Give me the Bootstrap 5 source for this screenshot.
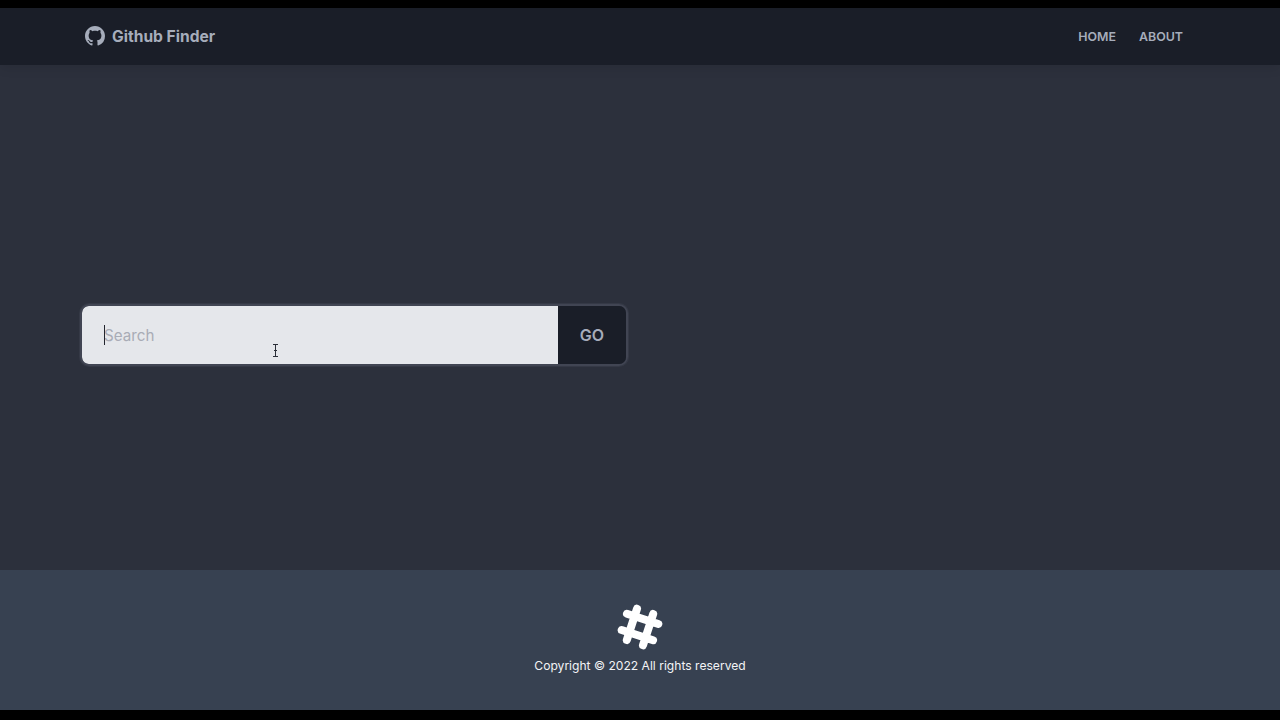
<!DOCTYPE html>
<html lang="en">
<head>
<meta charset="utf-8">
<title>Github Finder</title>
<link href="https://cdn.jsdelivr.net/npm/bootstrap@5.3.0/dist/css/bootstrap.min.css" rel="stylesheet">
<style>
html,body{height:100%;}
body{background:#000;font-family:Inter,"Liberation Sans",sans-serif;padding:8px 0 10px;}
.app-shell{height:702px;background:#2c303c;}
.top-bar{height:57px;background:#1a1e28;box-shadow:0 4px 10px rgba(0,0,0,.08);padding:0 85px;color:#a6adbb;}
.brand-icon{margin-top:-1px;}
.brand-name{font-size:15.6px;font-weight:700;color:#a6adbb;margin-left:-1px;}
.top-link{font-size:12.4px;font-weight:600;color:#a6adbb;text-decoration:none;position:relative;top:1px;}
.top-nav{gap:23px;padding-right:12px;}
.main-area{padding-left:80px;padding-top:35px;}
.search-ring{width:548px;height:62px;border:2px solid #414553;border-radius:9px;position:relative;overflow:hidden;box-shadow:0 0 0 1px #353946;}
.search-input{width:476px;background:#e5e7eb;border:0;outline:0;padding:2px 22px 0;font-size:15.2px;color:#1f2937;border-radius:6px 0 0 6px;}
.search-input::placeholder{color:#a9acb6;opacity:1;}
.search-go{flex:1;background:#1a1e28;color:#a6adbb;font-size:16px;font-weight:600;border:0;}
.caret-mark{position:absolute;left:22px;top:19px;width:1px;height:20px;background:#22252e;}
.beam-mark{position:absolute;left:189px;top:38px;}
.foot-area{height:140px;background:#374151;color:#f3f4f6;padding-top:34px;}
.foot-text{font-size:12.1px;margin-top:7px;line-height:18px;}
</style>
</head>
<body>
<div class="app-shell d-flex flex-column">
  <nav class="top-bar d-flex align-items-center justify-content-between">
    <div class="d-flex align-items-center gap-2">
      <svg class="brand-icon" width="20" height="20" viewBox="0 0 16 16" fill="#a6adbb" aria-hidden="true"><path d="M8 0C3.58 0 0 3.58 0 8c0 3.54 2.29 6.53 5.47 7.59.4.07.55-.17.55-.38 0-.19-.01-.82-.01-1.49-2.01.37-2.53-.49-2.69-.94-.09-.23-.48-.94-.82-1.13-.28-.15-.68-.52-.01-.53.63-.01 1.08.58 1.23.82.72 1.21 1.87.87 2.33.66.07-.52.28-.87.51-1.07-1.78-.2-3.64-.89-3.64-3.95 0-.87.31-1.59.82-2.15-.08-.2-.36-1.02.08-2.12 0 0 .67-.21 2.2.82.64-.18 1.32-.27 2-.27.68 0 1.36.09 2 .27 1.53-1.04 2.2-.82 2.2-.82.44 1.1.16 1.92.08 2.12.51.56.82 1.27.82 2.15 0 3.07-1.87 3.75-3.65 3.95.29.25.54.73.54 1.48 0 1.07-.01 1.93-.01 2.2 0 .21.15.46.55.38A8.012 8.012 0 0 0 16 8c0-4.42-3.58-8-8-8z"/></svg>
      <span class="brand-name">Github Finder</span>
    </div>
    <div class="top-nav d-flex align-items-center">
      <a class="top-link" href="#">HOME</a>
      <a class="top-link" href="#">ABOUT</a>
    </div>
  </nav>
  <main class="main-area flex-grow-1 d-flex align-items-center">
    <form class="search-ring d-flex">
      <input class="search-input" type="text" placeholder="Search">
      <button class="search-go" type="button">GO</button>
      <span class="caret-mark"></span>
      <svg class="beam-mark" width="9" height="13" viewBox="0 0 9 13" fill="none" stroke="#2b2f38" stroke-width="1" aria-hidden="true"><path d="M2 .5h5M2 12.5h5M4.5 .5v12M3 6.500h3"/></svg>
    </form>
  </main>
  <footer class="foot-area d-flex flex-column align-items-center">
    <svg width="46" height="46" viewBox="0 0 46 46" fill="none" stroke="#fff" stroke-width="8" stroke-linecap="round" aria-hidden="true"><g transform="rotate(18 23 23)"><path d="M14.500 6.500V39.500M31.500 6.500V39.500M6.500 14.500H39.500M6.500 31.500H39.500"/></g></svg>
    <div class="foot-text">Copyright © 2022 All rights reserved</div>
  </footer>
</div>
<script src="https://cdn.jsdelivr.net/npm/bootstrap@5.3.0/dist/js/bootstrap.bundle.min.js"></script>
</body>
</html>
